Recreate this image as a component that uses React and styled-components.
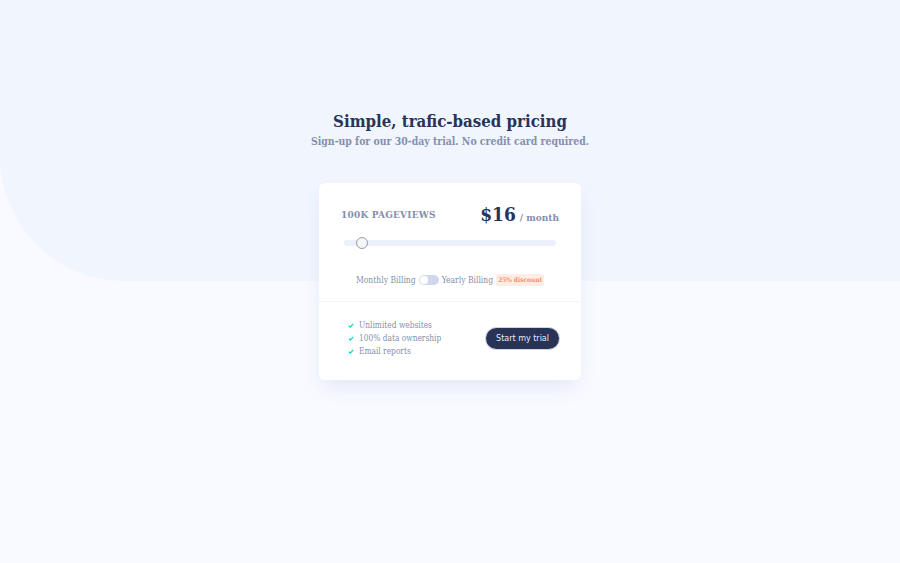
import React from "react";
import styled, { createGlobalStyle } from "styled-components";

const serif = `"DejaVu Serif Condensed", "DejaVu Serif", serif`;

const Global = createGlobalStyle`
  html, body { margin: 0; padding: 0; }
  body { background: #f8faff; font-family: ${serif}; }
`;

const Page = styled.div`
  position: relative;
  min-height: 563px;
  background: #f8faff;
  display: flex;
  flex-direction: column;
  align-items: center;
  padding-top: 110px;
  box-sizing: border-box;
  &::before {
    content: "";
    position: absolute;
    top: 0;
    left: 0;
    right: 0;
    height: 281px;
    background: #f0f5fe;
    border-bottom-left-radius: 125px;
  }
`;

const Header = styled.header`
  position: relative;
  text-align: center;
  margin-bottom: 33px;
`;

const Title = styled.h1`
  margin: 0;
  font-family: ${serif};
  font-stretch: condensed;
  font-weight: 700;
  font-size: 16.7px;
  line-height: 22px;
  color: #293356;
`;

const Subtitle = styled.p`
  margin: 0;
  font-family: ${serif};
  font-stretch: condensed;
  font-weight: 700;
  font-size: 10.4px;
  line-height: 18px;
  color: #858fad;
`;

const Card = styled.section`
  position: relative;
  width: 262px;
  background: #ffffff;
  border-radius: 6px;
  box-shadow: 0 10px 20px -5px rgba(195, 205, 235, 0.45);
  font-family: ${serif};
  font-stretch: condensed;
`;

const Top = styled.div`
  padding: 20px 22px 15px;
  border-bottom: 1px solid #f1f5fe;
`;

const PriceRow = styled.div`
  display: flex;
  justify-content: space-between;
  align-items: center;
`;

const Views = styled.span`
  font-weight: 700;
  font-size: 10px;
  letter-spacing: 0.2px;
  color: #858fad;
`;

const Price = styled.span`
  display: flex;
  align-items: baseline;
  gap: 4px;
  color: #293356;
  font-weight: 700;
  font-size: 19px;
`;

const Per = styled.span`
  font-size: 10px;
  color: #858fad;
`;

const Track = styled.div`
  position: relative;
  height: 6px;
  margin: 15px 3px 0;
  border-radius: 3px;
  background: #ecf0fb;
`;

const Thumb = styled.span`
  position: absolute;
  top: 50%;
  width: 10px;
  height: 10px;
  border-radius: 50%;
  background: #f4f5f7;
  border: 1px solid #9a9ca6;
  transform: translate(-50%, -50%);
`;

const BillingRow = styled.div`
  display: flex;
  justify-content: center;
  align-items: center;
  gap: 3px;
  margin-top: 28px;
  font-size: 8.5px;
  color: #858fad;
`;

const Toggle = styled.span`
  position: relative;
  width: 20px;
  height: 10px;
  border-radius: 5px;
  background: #cfd8ef;
  &::after {
    content: "";
    position: absolute;
    top: 1px;
    left: 1px;
    width: 8px;
    height: 8px;
    border-radius: 50%;
    background: #ffffff;
  }
`;

const Badge = styled.span`
  background: #feece7;
  color: #ff8c66;
  font-weight: 700;
  font-size: 6.5px;
  padding: 2px 2px;
  border-radius: 2px;
`;

const Bottom = styled.div`
  display: flex;
  justify-content: space-between;
  align-items: center;
  padding: 17px 22px 22px 29px;
`;

const List = styled.ul`
  list-style: none;
  margin: 0;
  padding: 0;
`;

const Item = styled.li`
  display: flex;
  align-items: center;
  gap: 5px;
  font-size: 8.3px;
  line-height: 13px;
  color: #858fad;
`;

const Button = styled.button`
  font-family: "DejaVu Sans", sans-serif;
  font-size: 8px;
  color: #e6ebfb;
  background: #293356;
  border: none;
  border-radius: 12px;
  padding: 0 10px;
  height: 21px;
  box-shadow: 0 0 0 1px #cfd4e6;
`;

const Check = () => (
  <svg width="6" height="5" viewBox="0 0 9 8">
    <path d="M1 4.5l2.3 2.2L8 1.5" fill="none" stroke="#10d8c4" strokeWidth="2" />
  </svg>
);

export default function App() {
  return (
    <>
      <Global />
      <Page>
        <Header>
          <Title>Simple, trafic-based pricing</Title>
          <Subtitle>Sign-up for our 30-day trial. No credit card required.</Subtitle>
        </Header>
        <Card>
          <Top>
            <PriceRow>
              <Views>100K PAGEVIEWS</Views>
              <Price>
                $16<Per>/ month</Per>
              </Price>
            </PriceRow>
            <Track>
              <Thumb style={{ left: "8.5%" }} />
            </Track>
            <BillingRow>
              <span>Monthly Billing</span>
              <Toggle />
              <span>Yearly Billing</span>
              <Badge>25% discount</Badge>
            </BillingRow>
          </Top>
          <Bottom>
            <List>
              <Item><Check />Unlimited websites</Item>
              <Item><Check />100% data ownership</Item>
              <Item><Check />Email reports</Item>
            </List>
            <Button>Start my trial</Button>
          </Bottom>
        </Card>
      </Page>
    </>
  );
}
